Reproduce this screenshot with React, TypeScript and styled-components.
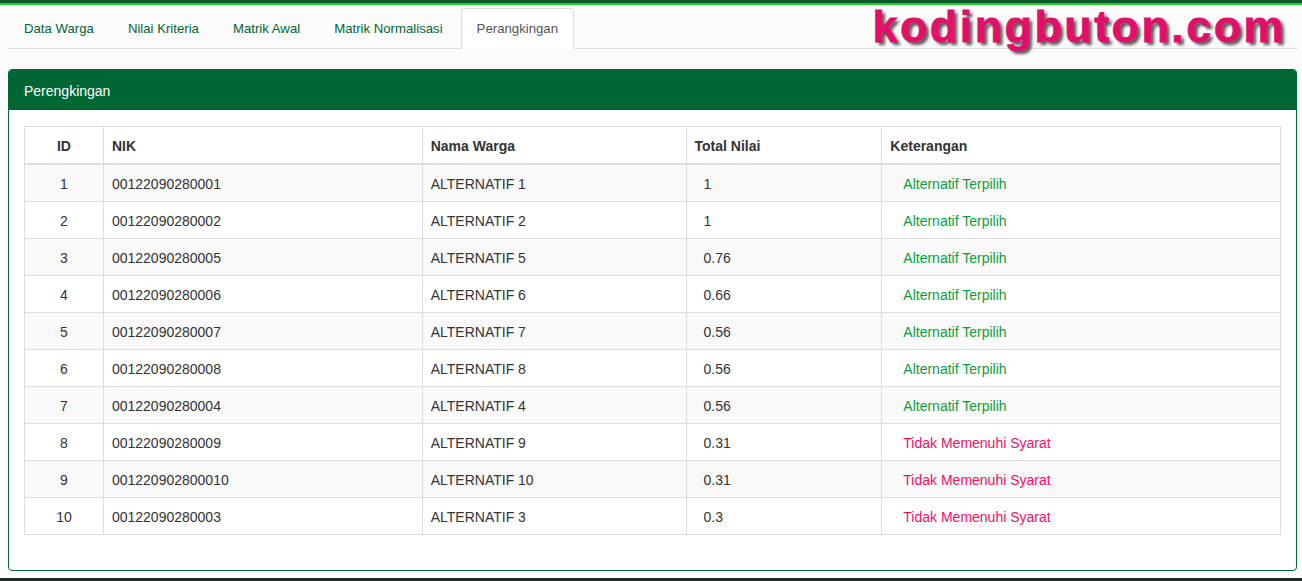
import React from "react";
import styled, { createGlobalStyle } from "styled-components";

const GlobalStyle = createGlobalStyle`
  html, body {
    margin: 0;
    padding: 0;
  }
  body {
    font-family: "Liberation Sans", Arial, sans-serif;
    font-size: 14px;
    line-height: 20px;
    color: #333;
    background: #fbfbfb;
    overflow: hidden;
  }
  * {
    box-sizing: border-box;
  }
`;

const TopBar = styled.div`
  height: 5px;
  background: #0b5a2c;
  border-bottom: 2px solid #17d417;
`;

const Page = styled.div`
  position: relative;
  padding: 3px 5px 0 8px;
`;

const Logo = styled.div`
  position: absolute;
  top: -4px;
  right: 16px;
  font-family: "Liberation Sans", Arial, sans-serif;
  font-weight: 700;
  font-size: 45px;
  line-height: 51px;
  letter-spacing: 2.4px;
  color: #e0106a;
  -webkit-text-stroke: 0.8px #e0106a;
  text-shadow: 3px 3px 3px rgba(30, 30, 30, 0.75);
  pointer-events: none;
`;

const Tabs = styled.ul`
  display: flex;
  margin: 0;
  padding: 0;
  list-style: none;
  border-bottom: 1px solid #ddd;
`;

const Tab = styled.li<{ $active?: boolean }>`
  margin: 0 2px -1px 0;
  padding: 10px 15px 9px;
  font-size: 13.2px;
  border: 1px solid ${(p) => (p.$active ? "#ddd" : "transparent")};
  border-bottom-color: ${(p) => (p.$active ? "#fff" : "transparent")};
  border-radius: 4px 4px 0 0;
  background: ${(p) => (p.$active ? "#fff" : "transparent")};
  color: ${(p) => (p.$active ? "#555" : "#006633")};
  cursor: pointer;
`;

const Panel = styled.div`
  margin-top: 20px;
  border: 1px solid #006633;
  border-radius: 4px;
  background: #fff;
`;

const PanelHeading = styled.div`
  padding: 11px 15px 9px;
  background: #006633;
  color: #fff;
  border-radius: 3px 3px 0 0;
`;

const PanelBody = styled.div`
  padding: 16px 15px 35px;
`;

const Table = styled.table`
  width: 100%;
  border-collapse: collapse;
  border: 1px solid #ddd;
`;

const Th = styled.th<{ $w: number; $center?: boolean }>`
  width: ${(p) => p.$w}px;
  padding: 9px 8px 7px;
  text-align: ${(p) => (p.$center ? "center" : "left")};
  font-weight: 700;
  border: 1px solid #ddd;
  border-bottom-width: 2px;
`;

const Row = styled.tr<{ $striped: boolean }>`
  background: ${(p) => (p.$striped ? "#f9f9f9" : "#fff")};
`;

const Td = styled.td<{ $center?: boolean }>`
  padding: 9px 8px 7px;
  border: 1px solid #ddd;
  text-align: ${(p) => (p.$center ? "center" : "left")};
`;

const Value = styled.span<{ $indent: number; $color?: string }>`
  display: inline-block;
  margin-left: ${(p) => p.$indent}px;
  color: ${(p) => p.$color ?? "inherit"};
`;

const Footer = styled.div`
  margin-top: 7px;
  height: 10px;
  background: #1f2b2b;
`;

const tabs = ["Data Warga", "Nilai Kriteria", "Matrik Awal", "Matrik Normalisasi", "Perangkingan"];

const rows = [
  { nik: "00122090280001", nama: "ALTERNATIF 1", total: "1" },
  { nik: "00122090280002", nama: "ALTERNATIF 2", total: "1" },
  { nik: "00122090280005", nama: "ALTERNATIF 5", total: "0.76" },
  { nik: "00122090280006", nama: "ALTERNATIF 6", total: "0.66" },
  { nik: "00122090280007", nama: "ALTERNATIF 7", total: "0.56" },
  { nik: "00122090280008", nama: "ALTERNATIF 8", total: "0.56" },
  { nik: "00122090280004", nama: "ALTERNATIF 4", total: "0.56" },
  { nik: "00122090280009", nama: "ALTERNATIF 9", total: "0.31" },
  { nik: "001220902800010", nama: "ALTERNATIF 10", total: "0.31" },
  { nik: "00122090280003", nama: "ALTERNATIF 3", total: "0.3" },
];

const App = () => {
  return (
    <>
      <GlobalStyle />
      <TopBar />
      <Page>
        <Tabs>
          {tabs.map((t) => (
            <Tab key={t} $active={t === "Perangkingan"}>
              {t}
            </Tab>
          ))}
        </Tabs>
        <Logo>kodingbuton.com</Logo>

        <Panel>
          <PanelHeading>Perengkingan</PanelHeading>
          <PanelBody>
            <Table>
              <thead>
                <tr>
                  <Th $w={79} $center>
                    ID
                  </Th>
                  <Th $w={319}>NIK</Th>
                  <Th $w={264}>Nama Warga</Th>
                  <Th $w={196}>Total Nilai</Th>
                  <Th $w={399}>Keterangan</Th>
                </tr>
              </thead>
              <tbody>
                {rows.map((r, i) => {
                  const terpilih = i < 7;
                  return (
                    <Row key={r.nik} $striped={i % 2 === 0}>
                      <Td $center>{i + 1}</Td>
                      <Td>{r.nik}</Td>
                      <Td>{r.nama}</Td>
                      <Td>
                        <Value $indent={9}>{r.total}</Value>
                      </Td>
                      <Td>
                        <Value $indent={13} $color={terpilih ? "#0a9e3a" : "#f0106a"}>
                          {terpilih ? "Alternatif Terpilih" : "Tidak Memenuhi Syarat"}
                        </Value>
                      </Td>
                    </Row>
                  );
                })}
              </tbody>
            </Table>
          </PanelBody>
        </Panel>
      </Page>
      <Footer />
    </>
  );
};

export default App;
